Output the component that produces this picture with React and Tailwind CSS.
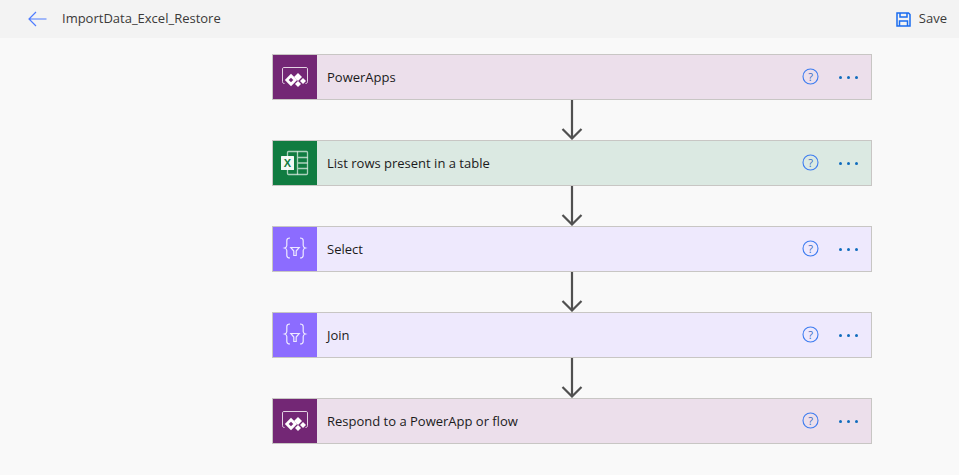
import React from 'react';

const font = "font-['Open_Sans',sans-serif]";

function PowerAppsIcon() {
  return (
    <svg width="32" height="32" viewBox="0 0 32 32" fill="none">
      <path d="M5.500 22.500c-1.400 0-2-.7-2-2V8c0-1 .5-1.500 1.500-1.500h22c1 0 1.500.5 1.500 1.500v12.500c0 1.300-.6 2-2 2" stroke="#fff" strokeOpacity="0.8" />
      <path d="M12 12.800l6.200 6.200-6.200 6.200L5.800 19z" fill="#fff" />
      <path d="M12 16.700l2.300 2.300-2.300 2.300L9.700 19z" fill="#732775" />
      <path d="M19 12l4 4-4 4-4-4z" fill="#fff" />
      <path d="M19 20l3 3-3 3-3-3z" fill="#fff" />
      <path d="M24 17l3 3-3 3-3-3z" fill="#fff" />
    </svg>
  );
}

function ExcelIcon() {
  return (
    <svg width="32" height="32" viewBox="0 0 32 32" fill="none">
      <rect x="8.500" y="4.500" width="20" height="23" rx="1" stroke="#fff" strokeOpacity="0.65" strokeWidth="1.300" />
      <path d="M18.500 4.500v23M18.500 10.500h10M18.500 16h10M18.500 21.500h10" stroke="#fff" strokeOpacity="0.65" strokeWidth="1.300" />
      <rect x="2" y="9" width="13" height="14" rx="0.500" fill="#fff" fillOpacity="0.95" />
      <text x="8.500" y="20" textAnchor="middle" fontSize="11" fontWeight="700" fill="#107C41" fontFamily="'Liberation Sans',sans-serif">X</text>
    </svg>
  );
}

function DataIcon() {
  return (
    <svg width="32" height="32" viewBox="0 0 32 32" fill="none" stroke="#fff" strokeOpacity="0.85" strokeWidth="1.200">
      <path d="M11 5C8.500 5 7.800 6 7.800 7.500v5c0 1.800-1.300 2.200-2.300 2.500 1 .3 2.300.7 2.300 2.500v5C7.800 24 8.500 25 11 25" />
      <path d="M21 5c2.500 0 3.200 1 3.200 2.500v5c0 1.800 1.300 2.200 2.300 2.500-1 .3-2.300.7-2.300 2.500v5c0 1.500-.7 2.500-3.200 2.500" />
      <path d="M11.800 14.500h8.400l-3 3.500v4.500h-2.400V18z" strokeWidth="1.200" />
    </svg>
  );
}

function Card({ title, icon, iconBg, bg }) {
  return (
    <div className={`flex h-[46px] items-stretch border border-[#c8c6c4] ${bg}`}>
      <div className={`flex w-[44px] shrink-0 items-center justify-center ${iconBg}`}>{icon}</div>
      <div className="flex-1 pl-[10px] text-[13px] leading-[44px] text-[#1b1b1b]">{title}</div>
      <svg className="mt-[12px] mr-[19px]" width="19" height="19" viewBox="0 0 19 19" fill="none">
        <circle cx="9.500" cy="9.500" r="7.500" stroke="#3d7cf0" strokeWidth="1.100" />
        <text x="9.500" y="13.500" textAnchor="middle" fontSize="11" fill="#3d6cc0" fontFamily="'Open Sans',sans-serif">?</text>
      </svg>
      <div className="mr-[13px] flex items-center gap-[5px]">
        <span className="h-[3px] w-[3px] rounded-full bg-[#0f6cbd]" />
        <span className="h-[3px] w-[3px] rounded-full bg-[#0f6cbd]" />
        <span className="h-[3px] w-[3px] rounded-full bg-[#0f6cbd]" />
      </div>
    </div>
  );
}

function Arrow() {
  return (
    <div className="flex h-[40px] justify-center">
      <svg width="22" height="40" viewBox="0 0 22 40" fill="none" stroke="#505050" strokeWidth="2.200">
        <path d="M11 0v38M1.500 29l9.500 9.500 9.500-9.500" />
      </svg>
    </div>
  );
}

const steps = [
  { title: 'PowerApps', icon: <PowerAppsIcon />, iconBg: 'bg-[#732775]', bg: 'bg-[#ecdfeb]' },
  { title: 'List rows present in a table', icon: <ExcelIcon />, iconBg: 'bg-[#107c41]', bg: 'bg-[#dbe9e2]' },
  { title: 'Select', icon: <DataIcon />, iconBg: 'bg-[#8c6cff]', bg: 'bg-[#eee9fd]' },
  { title: 'Join', icon: <DataIcon />, iconBg: 'bg-[#8c6cff]', bg: 'bg-[#eee9fd]' },
  { title: 'Respond to a PowerApp or flow', icon: <PowerAppsIcon />, iconBg: 'bg-[#732775]', bg: 'bg-[#ecdfeb]' },
];

export default function App() {
  return (
    <div className={`h-[475px] w-[959px] overflow-hidden bg-[#f9f9f9] ${font}`}>
      <header className="flex h-[38px] items-center bg-[#f3f3f3] pr-[12px] pl-[28px]">
        <svg width="19" height="16" viewBox="0 0 19 16" fill="none" stroke="#4f7cff" strokeWidth="1.200">
          <path d="M18.500 8H1M8 1L1 8l7 7" />
        </svg>
        <div className="ml-[15px] flex-1 text-[13px] text-[#3b3a39]">ImportData_Excel_Restore</div>
        <svg width="15" height="15" viewBox="0 0 15 15" fill="none" stroke="#1a6cf0" strokeWidth="1.500">
          <path d="M1 1h11.500L14 2.500V14H1z" />
          <path d="M4 1v4h7V1M3.500 14V9h8v5" />
        </svg>
        <div className="ml-[8px] text-[13px] text-[#3b3a39]">Save</div>
      </header>
      <main className="ml-[272px] w-[600px] pt-[16px]">
        {steps.map((s, i) => (
          <div key={s.title + i}>
            {i > 0 && <Arrow />}
            <Card {...s} />
          </div>
        ))}
      </main>
    </div>
  );
}
